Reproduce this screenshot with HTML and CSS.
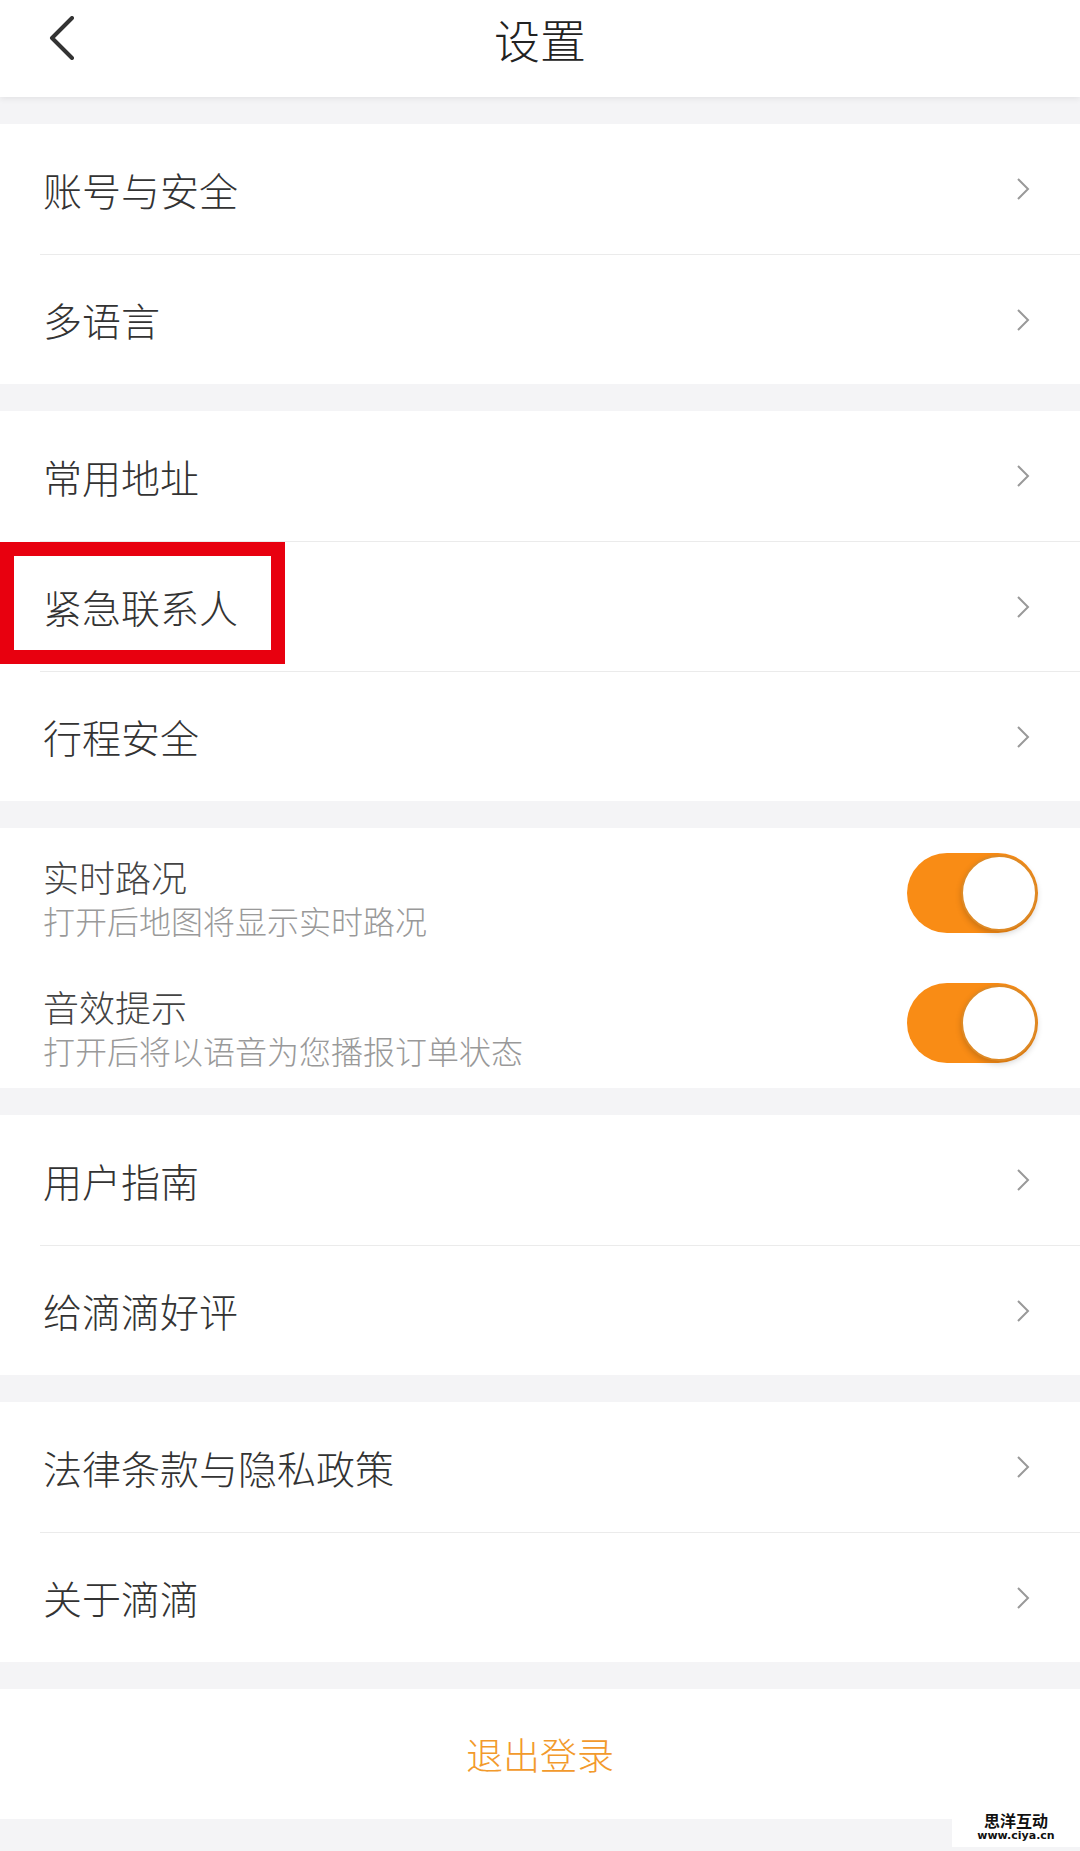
FILE: index.html
```html
<!DOCTYPE html>
<html lang="zh-CN">
<head>
  <meta charset="UTF-8" />
  <meta name="viewport" content="width=device-width, initial-scale=1.0"/>
  <title>设置</title>
  <link rel="stylesheet" href="styles.css">
</head>
<body>

  <header class="topbar">
    <a class="back" href="#">
      <svg width="28" height="44" viewBox="0 0 28 44"><polyline points="24,2 4,22 24,42" fill="none" stroke="#333" stroke-width="4" stroke-linecap="round" stroke-linejoin="round"/></svg>
    </a>
    <h1>设置</h1>
    <span></span>
  </header>

  <section class="group">
    <div class="row"><span class="label">账号与安全</span><svg class="arrow" width="14" height="24" viewBox="0 0 14 24"><polyline points="2,2 12,12 2,22"/></svg></div>
    <div class="row"><span class="label">多语言</span><svg class="arrow" width="14" height="24" viewBox="0 0 14 24"><polyline points="2,2 12,12 2,22"/></svg></div>
  </section>

  <section class="group">
    <div class="row"><span class="label">常用地址</span><svg class="arrow" width="14" height="24" viewBox="0 0 14 24"><polyline points="2,2 12,12 2,22"/></svg></div>
    <div class="row">
      <span class="label">紧急联系人</span><svg class="arrow" width="14" height="24" viewBox="0 0 14 24"><polyline points="2,2 12,12 2,22"/></svg>
      <span class="mark"></span>
    </div>
    <div class="row"><span class="label">行程安全</span><svg class="arrow" width="14" height="24" viewBox="0 0 14 24"><polyline points="2,2 12,12 2,22"/></svg></div>
  </section>

  <section class="group">
    <div class="row switch-row">
      <div class="texts">
        <span class="title">实时路况</span>
        <span class="sub">打开后地图将显示实时路况</span>
      </div>
      <span class="toggle"><span class="knob"></span></span>
    </div>
    <div class="row switch-row">
      <div class="texts">
        <span class="title">音效提示</span>
        <span class="sub">打开后将以语音为您播报订单状态</span>
      </div>
      <span class="toggle"><span class="knob"></span></span>
    </div>
  </section>

  <section class="group">
    <div class="row"><span class="label">用户指南</span><svg class="arrow" width="14" height="24" viewBox="0 0 14 24"><polyline points="2,2 12,12 2,22"/></svg></div>
    <div class="row"><span class="label">给滴滴好评</span><svg class="arrow" width="14" height="24" viewBox="0 0 14 24"><polyline points="2,2 12,12 2,22"/></svg></div>
  </section>

  <section class="group">
    <div class="row"><span class="label">法律条款与隐私政策</span><svg class="arrow" width="14" height="24" viewBox="0 0 14 24"><polyline points="2,2 12,12 2,22"/></svg></div>
    <div class="row"><span class="label">关于滴滴</span><svg class="arrow" width="14" height="24" viewBox="0 0 14 24"><polyline points="2,2 12,12 2,22"/></svg></div>
  </section>

  <section class="group">
    <button class="logout">退出登录</button>
  </section>

  <div class="watermark">
    <strong>思洋互动</strong>
    <span>www.ciya.cn</span>
  </div>

</body>
</html>
```

FILE: styles.css
```css
body {
  margin: 0;
  min-height: 100vh;
  position: relative;
  font-family: "Noto Sans CJK SC", "Noto Sans", sans-serif;
  font-weight: 300;
  background-color: #f4f4f6;
  color: #333;
}

.topbar {
  height: 97px;
  box-sizing: border-box;
  padding-bottom: 22px;
  display: grid;
  grid-template-columns: 1fr auto 1fr;
  align-items: center;
  background-color: white;
  box-shadow: 0 2px 6px rgba(0,0,0,0.07);
}

.back {
  display: flex;
  padding-left: 48px;
}

.topbar h1 {
  margin: 0;
  font-size: 46px;
  font-weight: 300;
  color: #222;
  line-height: 1;
}

.group {
  margin-top: 27px;
  background-color: white;
}

.row {
  position: relative;
  height: 130px;
  box-sizing: border-box;
  margin-left: 40px;
  padding: 0 50px 0 3px;
  display: flex;
  align-items: center;
  justify-content: space-between;
}

.row + .row {
  border-top: 1px solid #ebebeb;
}

.label {
  font-size: 39px;
  line-height: 1.2;
}

.arrow {
  fill: none;
  stroke: #999;
  stroke-width: 2;
}

.mark {
  position: absolute;
  left: -40px;
  top: 0;
  width: 285px;
  height: 122px;
  box-sizing: border-box;
  border: 14px solid #e8000f;
}

.switch-row {
  padding-right: 42px;
}

.switch-row + .switch-row {
  border-top: none;
}

.texts {
  display: flex;
  flex-direction: column;
  gap: 3px;
  padding-top: 8px;
}

.title {
  font-size: 36px;
  line-height: 1.2;
  color: #444;
}

.sub {
  font-size: 32px;
  line-height: 1.2;
  color: #999;
}

.toggle {
  width: 131px;
  height: 80px;
  box-sizing: border-box;
  border-radius: 40px;
  background-color: #f98c15;
  display: flex;
  align-items: center;
  justify-content: flex-end;
  padding: 0 1px;
}

.knob {
  width: 76px;
  height: 76px;
  box-sizing: border-box;
  border-radius: 50%;
  background-color: white;
  border: 2px solid #de8a26;
  box-shadow: 0 3px 6px rgba(0,0,0,0.18);
}

.logout {
  display: block;
  width: 100%;
  height: 130px;
  border: none;
  background: none;
  font-family: inherit;
  font-weight: 300;
  font-size: 37px;
  color: #f29a2c;
  cursor: pointer;
}

.watermark {
  position: absolute;
  right: 0;
  bottom: 4px;
  width: 128px;
  height: 40px;
  background-color: white;
  display: flex;
  flex-direction: column;
  align-items: center;
  justify-content: center;
  line-height: 1.15;
  color: #111;
}

.watermark strong {
  font-size: 16px;
  font-weight: bold;
}

.watermark span {
  font-family: "DejaVu Sans", sans-serif;
  font-size: 11px;
  font-weight: bold;
}
```
